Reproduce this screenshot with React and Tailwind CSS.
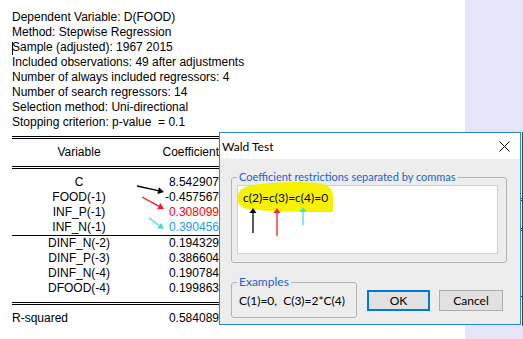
import React from "react";

const Arrow = ({ x1, y1, x2, y2, color, w = 1.3, hl = 6, hw = 3.5 }) => {
  const dx = x2 - x1;
  const dy = y2 - y1;
  const L = Math.hypot(dx, dy);
  const ux = dx / L;
  const uy = dy / L;
  const bx = x2 - ux * hl;
  const by = y2 - uy * hl;
  const px = -uy;
  const py = ux;
  return (
    <g>
      <line x1={x1} y1={y1} x2={bx} y2={by} stroke={color} strokeWidth={w} />
      <polygon
        points={`${x2},${y2} ${bx + px * hw},${by + py * hw} ${bx - px * hw},${by - py * hw}`}
        fill={color}
      />
    </g>
  );
};

const rowsA = [
  ["C", "8.542907", "text-black"],
  ["FOOD(-1)", "-0.457567", "text-black"],
  ["INF_P(-1)", "0.308099", "text-[#ff0000]"],
  ["INF_N(-1)", "0.390456", "text-[#22a0e8]"],
];
const rowsB = [
  ["DINF_N(-2)", "0.194329"],
  ["DINF_P(-3)", "0.386604"],
  ["DINF_N(-4)", "0.190784"],
  ["DFOOD(-4)", "0.199863"],
];

function Row({ a, b, cls = "text-black" }) {
  return (
    <div className="flex h-[15px] items-center">
      <div className="w-[134px] text-center">{a}</div>
      <div className={`w-[73px] text-right ${cls}`}>{b}</div>
    </div>
  );
}

export default function App() {
  return (
    <div className="relative flex h-[339px] w-[523px] overflow-hidden bg-white">
      {/* main EViews output */}
      <div className="relative w-[465px] bg-white pl-[12px] pt-[10px] text-[12px] leading-[15px] text-black [font-family:'Liberation_Sans',Arial,sans-serif]">
        <div>Dependent Variable: D(FOOD)</div>
        <div>Method: Stepwise Regression</div>
        <div>Sample (adjusted): 1967 2015</div>
        <div>Included observations: 49 after adjustments</div>
        <div>Number of always included regressors: 4</div>
        <div>Number of search regressors: 14</div>
        <div>Selection method: Uni-directional</div>
        <div>Stopping criterion: p-value&nbsp; = 0.1</div>

        <div className="mt-[6px] w-[400px]">
          <div className="flex h-[33px] items-center border-y-[3px] border-double border-black">
            <div className="w-[134px] text-center">Variable</div>
            <div className="w-[73px] text-right">Coefficient</div>
          </div>
          <div className="pt-[6px]">
            {rowsA.map(([a, b, c]) => (
              <Row key={a} a={a} b={b} cls={c} />
            ))}
          </div>
          <div className="border-t border-black">
            {rowsB.map(([a, b]) => (
              <Row key={a} a={a} b={b} />
            ))}
          </div>
          <div className="mt-[6px] border-t-[3px] border-double border-black pt-[6px]">
            <div className="flex h-[15px] items-center">
              <div className="w-[134px]">R-squared</div>
              <div className="w-[73px] text-right">0.584089</div>
            </div>
          </div>
        </div>

        {/* text cursor */}
        <div className="absolute left-[12px] top-[42px] h-[13px] w-[1px] bg-black" />

        <svg className="pointer-events-none absolute left-0 top-0" width="465" height="339">
          <Arrow x1={137} y1={186} x2={164} y2={192} color="#000000" />
          <Arrow x1={142} y1={197} x2={164} y2={209} color="#ff1a1a" />
          <Arrow x1={149} y1={218} x2={164} y2={229} color="#49dcd4" />
        </svg>
      </div>

      {/* lavender panel */}
      <div className="flex-1 bg-[#e6e6fa]" />

      {/* strip of window behind the dialog */}
      <div className="absolute left-[520px] top-[132px] h-[194px] w-[3px] bg-white">
        <div className="absolute left-[2px] top-0 h-full w-[1px] bg-[#444]" />
        <div className="absolute left-0 top-[66px] h-[3px] w-[3px] border-y border-[#333]" />
        <div className="absolute left-0 top-[96px] h-[3px] w-[3px] border-y border-[#333]" />
        <div className="absolute left-0 top-[164px] h-[1px] w-[3px] bg-[#333]" />
      </div>

      {/* Wald Test dialog */}
      <div className="absolute left-[219px] top-[132px] flex h-[193px] w-[302px] flex-col border border-[#2b86d9] bg-[#ededed] text-[12px] leading-[15px] text-black [font-family:Lato,'Noto_Sans',sans-serif]">
        <div className="flex h-[26px] items-center bg-white pl-[2px]">
          <div className="flex-1">Wald Test</div>
          <div className="flex w-[32px] justify-center">
            <svg width="11" height="11" viewBox="0 0 11 11">
              <line x1="0.5" y1="0.5" x2="10.5" y2="10.5" stroke="#000" strokeWidth="1" />
              <line x1="10.5" y1="0.5" x2="0.5" y2="10.5" stroke="#000" strokeWidth="1" />
            </svg>
          </div>
        </div>

        <div className="flex flex-col pl-[11px]">
          {/* restrictions group */}
          <div className="relative mt-[18px] h-[86px] w-[276px] rounded-[3px] border border-[#b4b4b4] pl-[5px] pt-[7px]">
            <div className="absolute -top-[9px] left-[5px] bg-[#ededed] px-[2px] text-[11px] text-[#1d5fcc]">
              Coefficient restrictions separated by commas
            </div>
            <div className="relative h-[69px] w-[261px] border border-[#d0d0d0] bg-white pl-[5px] pt-[4px]">
              <svg className="absolute -left-[1px] -top-[5px]" width="100" height="34">
                <path
                  d="M1,20 C0,12 3,7 12,5 C30,1 60,0 80,2 C92,3 96,8 96,16 L96,31 C80,31 40,31 20,29 C8,28 2,27 1,20 Z"
                  fill="#f5f200"
                />
              </svg>
              <div className="relative text-[12px]">c(2)=c(3)=c(4)=0</div>
              <svg className="pointer-events-none absolute left-0 top-0" width="261" height="69">
                <Arrow x1={15} y1={47} x2={15} y2={22} color="#000000" hl={5} hw={3.5} />
                <Arrow x1={39} y1={50} x2={39} y2={22} color="#ff1a1a" hl={5} hw={3.5} />
                <Arrow x1={65} y1={39} x2={65} y2={21} color="#49dcd4" hl={5} hw={3.5} />
              </svg>
            </div>
          </div>

          {/* bottom row */}
          <div className="mt-[19px] flex items-center">
            <div className="relative h-[36px] w-[126px] rounded-[3px] border border-[#b4b4b4] pl-[7px] pt-[10px]">
              <div className="absolute -top-[9px] left-[5px] bg-[#ededed] px-[2px] text-[#1d5fcc]">
                Examples
              </div>
              <div className="whitespace-pre">C(1)=0,  C(3)=2*C(4)</div>
            </div>
            <div className="ml-[10px] flex h-[21px] w-[63px] items-center justify-center border-2 border-[#0078d7] bg-[#e1e1e1]">
              OK
            </div>
            <div className="ml-[9px] flex h-[21px] w-[64px] items-center justify-center border border-[#adadad] bg-[#e1e1e1]">
              Cancel
            </div>
          </div>
        </div>
      </div>
    </div>
  );
}
